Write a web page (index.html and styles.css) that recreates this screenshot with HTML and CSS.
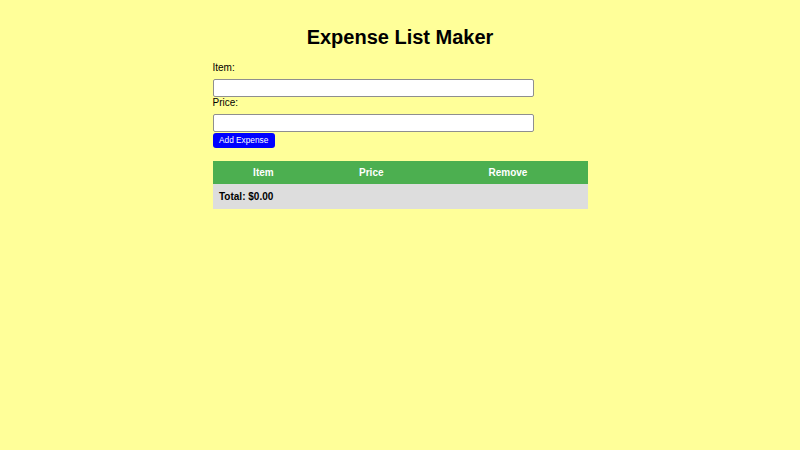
FILE: index.html
```html
<!DOCTYPE html>
<html lang="en">
<head>
<meta charset="utf-8">
<title>Expense List Maker</title>
<link rel="stylesheet" href="styles.css">
</head>
<body>
<div class="container">
  <h1 class="title">Expense List Maker</h1>
  <form class="form">
    <label class="label" for="item">Item:</label>
    <input class="field" type="text" id="item">
    <label class="label" for="price">Price:</label>
    <input class="field" type="text" id="price">
    <button class="add-btn" type="button">Add Expense</button>
  </form>
  <table class="table">
    <thead>
      <tr><th class="th">Item</th><th class="th">Price</th><th class="th">Remove</th></tr>
    </thead>
    <tbody></tbody>
    <tfoot>
      <tr><td class="total" colspan="3">Total: $0.00</td></tr>
    </tfoot>
  </table>
</div>
</body>
</html>
```

FILE: styles.css
```css
html, body {
  margin: 0;
  padding: 0;
}
body {
  background: #ffff99;
  font-family: "Liberation Sans", Arial, sans-serif;
  font-size: 10px;
  color: #000;
}
.container {
  width: 375px;
  margin: 0 auto;
  padding-top: 26px;
}
.title {
  margin: 0 0 13px;
  font-size: 20px;
  line-height: 23px;
  font-weight: bold;
  text-align: center;
}
.form {
  margin: 0;
}
.label {
  display: block;
  line-height: 11.5px;
  margin-bottom: 5.5px;
}
.field {
  display: block;
  box-sizing: border-box;
  width: 321px;
  height: 18px;
  margin: 0;
  padding: 0 3px;
  border: 1px solid #8f8f8f;
  border-radius: 2px;
  background: #fff;
  font-family: inherit;
  font-size: 8.3px;
}
.add-btn {
  display: block;
  margin-top: 0.5px;
  height: 15px;
  padding: 0 6.5px;
  border: none;
  border-radius: 3px;
  background: #0000ff;
  color: #fff;
  font-family: "Liberation Sans", Arial, sans-serif;
  font-size: 8.3px;
  line-height: 15px;
}
.table {
  width: 100%;
  margin-top: 13px;
  border-collapse: collapse;
}
.th {
  background: #4caf50;
  color: #fff;
  font-weight: bold;
  font-size: 10px;
  height: 23.5px;
  padding: 0 6px;
  text-align: center;
}
.total {
  background: #dddddd;
  font-weight: bold;
  height: 24.5px;
  padding: 0 6.5px;
  text-align: left;
}
```
